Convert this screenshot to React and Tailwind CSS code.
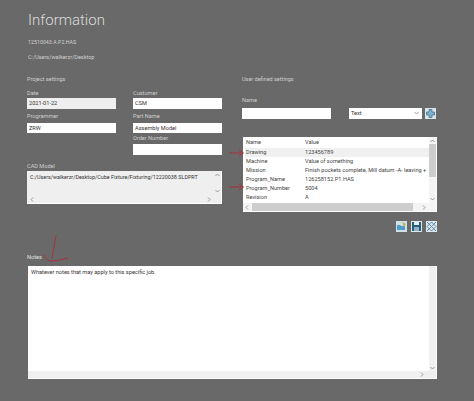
function Field({ label, value, gray, labelH = "h-[13px] leading-[16px]", boxH = "h-[11px]" }) {
  return (
    <div className="flex flex-col">
      <div className={`${labelH} text-[5.6px] text-[#cfcfcf]`}>{label}</div>
      <div className={`${boxH} w-[89px] px-[2px] text-[5.6px] leading-[11px] text-[#333] ${gray ? "bg-[#efefef]" : "bg-white"}`}>{value}</div>
    </div>
  );
}

function Chevron({ dir, className = "" }) {
  const paths = {
    up: "M0.5 3L2.5 1L4.5 3",
    down: "M0.5 1L2.5 3L4.5 1",
    left: "M3 0.5L1 2.5L3 4.5",
    right: "M1 0.5L3 2.5L1 4.5",
  };
  return (
    <svg className={className} width="5" height="5" viewBox="0 0 5 5" fill="none" stroke="#777" strokeWidth="0.7">
      <path d={paths[dir]} />
    </svg>
  );
}

function Arrow({ className }) {
  return (
    <svg className={className} width="16" height="8" viewBox="0 0 16 8" fill="none" stroke="#a8323e" strokeWidth="1">
      <path d="M0 4H14M10 1L14.5 4L10 7" />
    </svg>
  );
}

const rows = [
  ["Drawing", "123456789"],
  ["Machine", "Value of something"],
  ["Mission", "Finish pockets complete, Mill datum -A- leaving +"],
  ["Program_Name", "126258152.P1.HAS"],
  ["Program_Number", "5004"],
  ["Revision", "A"],
];

function PropTable() {
  return (
    <div className="h-[75px] w-[194px] bg-white pr-[1px] pb-[1px] text-[5.6px] text-[#444]">
      <div className="flex h-[66px]">
        <div className="min-w-0 flex-1 overflow-hidden pl-[2px]">
          <div className="flex h-[11px] items-center pl-[1px]">
            <span className="w-[59px] shrink-0">Name</span>
            <span>Value</span>
          </div>
          {rows.map((r, i) => (
            <div key={r[0]} className={`flex h-[9px] items-center pl-[1px] leading-[9px] ${i == 0 ? "bg-[#f0f0f0]" : ""}`}>
              <span className="w-[59px] shrink-0">{r[0]}</span>
              <span className="whitespace-nowrap">{r[1]}</span>
            </div>
          ))}
        </div>
        <div className="flex w-[7px] flex-col items-center justify-between bg-[#f4f4f4]">
          <Chevron dir="up" className="mt-[2px]" />
          <div className="mb-auto h-[33px] w-full bg-[#cdcdcd]"></div>
          <Chevron dir="down" className="mb-[1px]" />
        </div>
      </div>
      <div className="flex h-[8px] items-center bg-[#f4f4f4]">
        <Chevron dir="left" className="ml-[2px]" />
        <div className="ml-[2px] h-[8px] w-[161px] bg-[#cdcdcd]"></div>
        <Chevron dir="right" className="ml-auto mr-[9px]" />
      </div>
    </div>
  );
}

export default function App() {
  return (
    <div className="relative h-[401px] w-[474px] overflow-hidden bg-[#696969] pl-[27px] font-['Roboto',sans-serif]">
      <div className="pt-[9px] pl-[1px] text-[15px] font-light leading-[22px] text-[#dcdcdc]">Information</div>
      <div className="mt-[6px] h-[10px] pl-[1px] text-[5.3px] leading-[10px] text-[#d0d0d0]">12510043.A.P2.HAS</div>
      <div className="mt-[5px] h-[10px] pl-[1px] text-[5.5px] leading-[10px] text-[#d0d0d0]">C:/Users/walkerzr/Desktop</div>

      <div className="mt-[12px] flex">
        <div className="w-[215px]">
          <div className="h-[10px] text-[5.5px] leading-[10px] text-[#d0d0d0]">Project settings</div>
          <div className="mt-[1px] grid w-[195px] grid-cols-[106px_89px]">
            <Field label="Date" value="2021-01-22" gray />
            <Field label="Customer" value="CSM" />
            <Field label="Programmer" value="ZRW" labelH="h-[14px] leading-[14px]" boxH="h-[10px]" />
            <Field label="Part Name" value="Assembly Model" labelH="h-[14px] leading-[14px]" boxH="h-[10px]" />
            <div></div>
            <Field label="Order Number" value="" labelH="h-[11px] leading-[11px]" />
          </div>
          <div className="mt-[6px] h-[10px] text-[5.6px] leading-[10px] text-[#cfcfcf]">CAD Model</div>
          <div className="flex h-[33px] w-[195px] flex-col border-r border-b border-white bg-[#efefef] text-[5.4px] text-[#333]">
            <div className="flex h-[24px]">
              <div className="flex-1 whitespace-nowrap pl-[3px] pt-[1px] leading-[10px]">C:/Users/walkerzr/Desktop/Cube Fixture/Fixturing/12220038.SLDPRT</div>
              <div className="flex w-[7px] flex-col items-center justify-between pb-[1px] pt-[2px]">
                <Chevron dir="up" />
                <Chevron dir="down" />
              </div>
            </div>
            <div className="flex flex-1 items-center justify-between pl-[3px] pr-[9px]">
              <Chevron dir="left" />
              <Chevron dir="right" />
            </div>
          </div>
        </div>

        <div>
          <div className="h-[10px] text-[5.5px] leading-[10px] text-[#d0d0d0]">User defined settings</div>
          <div className="mt-[11px] h-[11px] text-[5.6px] leading-[11px] text-[#cfcfcf]">Name</div>
          <div className="mt-[2px] flex h-[11px]">
            <div className="w-[89px] bg-white"></div>
            <div className="ml-[18px] flex w-[73px] items-center justify-between bg-white px-[2px] text-[5.6px] text-[#333]">
              Text
              <Chevron dir="down" className="mr-[1px]" />
            </div>
            <div className="ml-[3px] flex h-[11px] w-[11px] items-center justify-center bg-[#d7e4ea]">
              <svg width="9" height="9" viewBox="0 0 9 9"><path d="M3 0.5H6V3H8.5V6H6V8.5H3V6H0.5V3H3Z" fill="#7fb0cc" stroke="#2f5f80" strokeWidth="0.6" /></svg>
            </div>
          </div>
          <div className="ml-[1px] mt-[18px]"><PropTable /></div>
          <div className="mt-[9px] flex w-[195px] justify-end gap-[4px]">
            <svg width="11" height="11" viewBox="0 0 11 11"><rect width="11" height="11" fill="#cfe0e6" /><path d="M1 4H4L5 5H9V9H1Z" fill="#4f9bc9" /><path d="M6 1L10 3L8 6Z" fill="#c9b04f" /></svg>
            <svg width="11" height="11" viewBox="0 0 11 11"><rect width="11" height="11" fill="#dfe7ea" /><rect x="1" y="1" width="9" height="9" fill="#245f7c" /><rect x="3" y="1" width="5" height="3" fill="#e6eef2" /><rect x="3" y="6" width="5" height="4" fill="#8fb3c4" /></svg>
            <svg width="11" height="11" viewBox="0 0 11 11"><rect width="11" height="11" fill="#dfe7ea" /><path d="M1 1L10 10M10 1L1 10M5.5 1L10 5.5L5.5 10L1 5.5Z" fill="none" stroke="#5d8bb0" strokeWidth="1" /></svg>
          </div>
        </div>
      </div>

      <div className="mt-[21px] h-[9px] text-[5.6px] leading-[9px] text-[#e0e0e0]">Notes</div>
      <div className="ml-[1px] mt-[4px] flex h-[113px] w-[409px] flex-col border-r border-b border-white bg-[#f0f0f0]">
        <div className="flex h-[105px]">
          <div className="flex-1 bg-white pl-[3px] pt-[1px] text-[5.6px] leading-[10px] text-[#333]">Whatever notes that may apply to this specific job.</div>
          <div className="flex w-[7px] flex-col items-center justify-end">
            <Chevron dir="down" />
          </div>
        </div>
        <div className="flex flex-1 items-center justify-end pr-[11px]">
          <Chevron dir="right" />
        </div>
      </div>

      <Arrow className="absolute left-[229px] top-[149px]" />
      <Arrow className="absolute left-[229px] top-[183px]" />
      <svg className="absolute left-[40px] top-[233px]" width="32" height="30" viewBox="0 0 32 30" fill="none" stroke="#a8323e" strokeWidth="1">
        <path d="M16 2C15 10 13 18 12 26M4 22C6 26 8 28 12 28C18 28 22 26 28 25" />
      </svg>
    </div>
  );
}
